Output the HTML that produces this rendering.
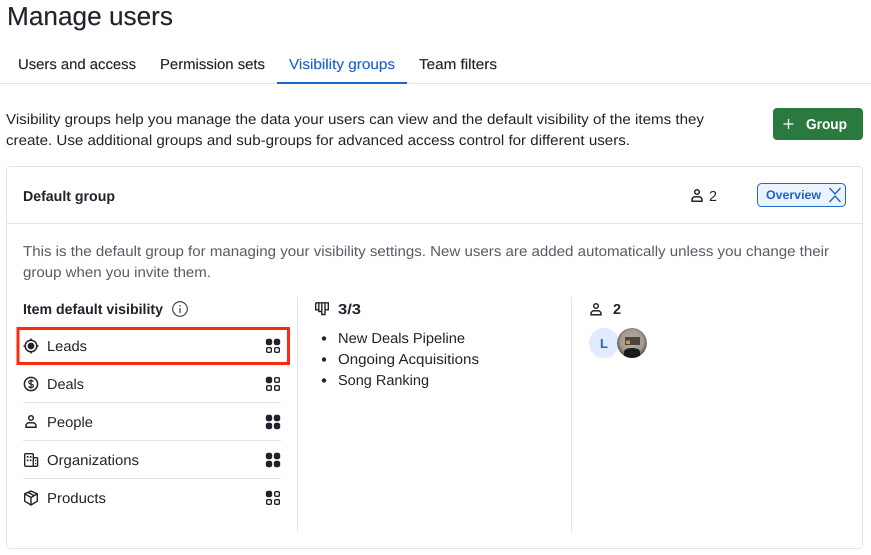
<!DOCTYPE html>
<html lang="en"><head><meta charset="utf-8"><title>Manage users</title>
<style>
html,body{margin:0;padding:0;background:#fff;width:871px;height:555px;overflow:hidden}
svg{display:block}
text{font-family:"Liberation Sans",sans-serif;font-size:14.4px;fill:#21232c;text-rendering:geometricPrecision}
.m{stroke:#21232c;stroke-width:.15}
.b{font-weight:700}
.g{fill:#565b66}
.i{fill:none;stroke:#21232c;stroke-width:1.500}
</style></head><body>
<svg width="871" height="555" viewBox="0 0 871 555" xmlns="http://www.w3.org/2000/svg">
<defs>
<clipPath id="av"><circle cx="632" cy="343" r="15"/></clipPath>
<radialGradient id="vg" cx=".5" cy=".45" r=".55"><stop offset="0" stop-color="#b9b0a3"/><stop offset=".7" stop-color="#a39a8d"/><stop offset="1" stop-color="#4f4a45"/></radialGradient>
<g id="gf"><rect x="-.2" y="-.2" width="6.400" height="6.400" rx="2.200" fill="#21232c"/></g>
<g id="go"><rect x=".7" y=".7" width="4.600" height="4.600" rx="1.200" fill="none" stroke="#21232c" stroke-width="1.400"/></g>
</defs>

<text x="7" y="25" textLength="166" lengthAdjust="spacingAndGlyphs" style="font-size:26px" stroke="#21232c" stroke-width=".15">Manage users</text>

<text x="18" y="69" class="m" textLength="118" lengthAdjust="spacingAndGlyphs">Users and access</text>
<text x="160" y="69" class="m" textLength="105" lengthAdjust="spacingAndGlyphs">Permission sets</text>
<text x="289" y="69" textLength="106" lengthAdjust="spacingAndGlyphs" style="fill:#1c63cf;stroke:#1c63cf;stroke-width:.15">Visibility groups</text>
<text x="419" y="69" class="m" textLength="78" lengthAdjust="spacingAndGlyphs">Team filters</text>
<rect x="0" y="83" width="871" height="1" fill="#e3e4e6"/>
<rect x="277" y="82" width="130" height="2" fill="#1c63cf"/>

<text x="6" y="124" textLength="698" lengthAdjust="spacingAndGlyphs">Visibility groups help you manage the data your users can view and the default visibility of the items they</text>
<text x="6" y="145" textLength="624" lengthAdjust="spacingAndGlyphs">create. Use additional groups and sub-groups for advanced access control for different users.</text>

<rect x="773" y="108" width="90" height="32" rx="4" fill="#2a7a40"/>
<path d="M788.500 119v10M783.500 124h10" stroke="#fff" stroke-width="1.300" fill="none"/>
<text x="806" y="129" class="b" textLength="41" lengthAdjust="spacingAndGlyphs" style="fill:#fff">Group</text>

<rect x="6.500" y="166.500" width="856" height="382" rx="4" fill="#fff" stroke="#e3e4e6"/>
<rect x="7" y="223" width="855" height="1" fill="#e3e4e6"/>

<text x="23" y="201" class="b" textLength="92" lengthAdjust="spacingAndGlyphs">Default group</text>
<g class="i" transform="translate(691,189)"><circle cx="6" cy="3" r="2.300"/><path d="M1 12.300v-1.500c0-1.800 1.500-3 3-3h4c1.500 0 3 1.200 3 3v1.500z"/></g>
<text x="709" y="201" textLength="8" lengthAdjust="spacingAndGlyphs">2</text>

<rect x="757.500" y="183.500" width="88" height="23" rx="4" fill="#eaf3fe" stroke="#2369d2"/>
<text x="766" y="199" class="b" textLength="55" lengthAdjust="spacingAndGlyphs" style="font-size:12.400px;fill:#1c63cf">Overview</text>
<path d="M829.500 188l5.500 6 5.500-6M829.500 202l5.500-6 5.500 6" fill="none" stroke="#1c63cf" stroke-width="1.300"/>

<text x="23" y="256" class="g" textLength="806" lengthAdjust="spacingAndGlyphs">This is the default group for managing your visibility settings. New users are added automatically unless you change their</text>
<text x="23" y="277" class="g" textLength="188" lengthAdjust="spacingAndGlyphs">group when you invite them.</text>

<text x="23" y="314" class="b" textLength="140" lengthAdjust="spacingAndGlyphs">Item default visibility</text>
<circle cx="180" cy="309" r="7.300" fill="none" stroke="#33363f" stroke-width="1.100"/>
<path d="M180 308v5M180 305v1.500" stroke="#33363f" stroke-width="1.200" fill="none"/>

<rect x="18" y="328.500" width="270.500" height="35" fill="#fff" stroke="#fb2a10" stroke-width="3"/>

<!-- Leads icon -->
<g fill="none" stroke="#21232c" stroke-width="1.500"><circle cx="31" cy="346" r="5.800"/><path d="M31 338.500v2M31 351.500v2M23.500 346h2M36.500 346h2"/></g>
<circle cx="31" cy="346" r="3.400" fill="#21232c"/>
<text x="47" y="351" textLength="40" lengthAdjust="spacingAndGlyphs">Leads</text>
<use href="#gf" x="266" y="339"/><use href="#gf" x="274" y="339"/><use href="#go" x="266" y="347"/><use href="#go" x="274" y="347"/>

<!-- Deals icon -->
<circle cx="31" cy="384" r="6.600" class="i"/>
<path d="M33.300 381.800c-.4-.9-1.300-1.300-2.300-1.300-1.300 0-2.300.7-2.300 1.700 0 2.400 4.700 1.200 4.700 3.700 0 1-1 1.700-2.400 1.700-1.100 0-2-.5-2.400-1.400M31 379.200v9.600" fill="none" stroke="#21232c" stroke-width="1.200"/>
<text x="47" y="389" textLength="37" lengthAdjust="spacingAndGlyphs">Deals</text>
<use href="#gf" x="266" y="377"/><use href="#go" x="274" y="377"/><use href="#go" x="266" y="385"/><use href="#go" x="274" y="385"/>
<rect x="23" y="402" width="258" height="1" fill="#e3e4e6"/>

<!-- People icon -->
<g class="i" transform="translate(25,415)"><circle cx="6" cy="3" r="2.300"/><path d="M1 12.300v-1.500c0-1.800 1.500-3 3-3h4c1.500 0 3 1.200 3 3v1.500z"/></g>
<text x="47" y="427" textLength="46" lengthAdjust="spacingAndGlyphs">People</text>
<use href="#gf" x="266" y="415"/><use href="#gf" x="274" y="415"/><use href="#gf" x="266" y="423"/><use href="#gf" x="274" y="423"/>
<rect x="23" y="440" width="258" height="1" fill="#e3e4e6"/>

<!-- Organizations icon -->
<g fill="none" stroke="#21232c" stroke-width="1.400"><rect x="24.700" y="453.700" width="8.600" height="12.600" rx="1"/><path d="M33.400 457.700h3.200a1 1 0 0 1 1 1v6.600a1 1 0 0 1-1 1h-3.200"/></g>
<g fill="#21232c"><rect x="26.800" y="456" width="1.700" height="1.700"/><rect x="29.800" y="456" width="1.700" height="1.700"/><rect x="26.800" y="459.500" width="1.700" height="1.700"/><rect x="29.800" y="459.500" width="1.700" height="1.700"/><rect x="35" y="460" width="1.200" height="1.200"/><rect x="35" y="463" width="1.200" height="1.200"/></g>
<text x="47" y="465" textLength="92" lengthAdjust="spacingAndGlyphs">Organizations</text>
<use href="#gf" x="266" y="453"/><use href="#gf" x="274" y="453"/><use href="#gf" x="266" y="461"/><use href="#gf" x="274" y="461"/>
<rect x="23" y="478" width="258" height="1" fill="#e3e4e6"/>

<!-- Products icon -->
<path d="M31 491l6.300 2.800v7.400L31 505l-6.300-3.800v-7.400zM24.700 493.800L31 497.500l6.300-3.700M31 497.500V505M27.800 492.300l6.300 3.300" fill="none" stroke="#21232c" stroke-width="1.400" stroke-linejoin="round"/>
<text x="47" y="503" textLength="59" lengthAdjust="spacingAndGlyphs">Products</text>
<use href="#gf" x="266" y="491"/><use href="#go" x="274" y="491"/><use href="#go" x="266" y="499"/><use href="#go" x="274" y="499"/>

<rect x="297" y="297" width="1" height="235" fill="#e3e4e6"/>
<rect x="571" y="297" width="1" height="235" fill="#e3e4e6"/>

<!-- Pipeline icon -->
<path d="M315.700 302.800h12.600v7h-3.300M315.700 302.800v7h3.100v-7M318.800 309.800v1.700h3v3h3.200v-11.700M321.800 302.800v8.700" fill="none" stroke="#21232c" stroke-width="1.400"/>
<text x="338" y="314" class="b" textLength="23" lengthAdjust="spacingAndGlyphs">3/3</text>

<circle cx="324" cy="338.500" r="2.200" fill="#21232c"/>
<circle cx="324" cy="359.500" r="2.200" fill="#21232c"/>
<circle cx="324" cy="380.500" r="2.200" fill="#21232c"/>
<text x="338" y="343" textLength="127" lengthAdjust="spacingAndGlyphs">New Deals Pipeline</text>
<text x="338" y="364" textLength="141" lengthAdjust="spacingAndGlyphs">Ongoing Acquisitions</text>
<text x="338" y="385" textLength="91" lengthAdjust="spacingAndGlyphs">Song Ranking</text>

<g class="i" transform="translate(590,303)"><circle cx="6" cy="3" r="2.300"/><path d="M1 11.800v-1c0-1.800 1.500-3 3-3h4c1.500 0 3 1.200 3 3v1z"/></g>
<text x="613" y="314" class="b" textLength="8" lengthAdjust="spacingAndGlyphs">2</text>

<circle cx="604" cy="343" r="15" fill="#e0ecfd"/>
<text x="600" y="348" class="b" textLength="8.500" style="font-size:13px;fill:#1c63cf">L</text>

<g clip-path="url(#av)">
<circle cx="632" cy="343" r="15" fill="url(#vg)"/>
<rect x="625" y="337" width="15" height="8" fill="#4a443b"/>
<rect x="626" y="340.500" width="4" height="3.500" fill="#c69a3e"/>
<path d="M624 358v-6c0-2 2-4 8-4s8 2 8 4v6z" fill="#1c1b1c"/>
</g>
</svg>
</body></html>
